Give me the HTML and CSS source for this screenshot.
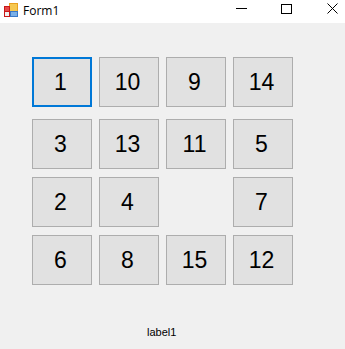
FILE: index.html
```html
<!DOCTYPE html>
<html>
<head>
<meta charset="utf-8">
<link rel="stylesheet" href="styles.css">
</head>
<body>
<div class="window">
  <div class="titlebar">
    <svg class="app-icon" width="16" height="16" viewBox="0 0 16 16">
      <rect x="7" y="1" width="9" height="10" fill="#e8a020"/>
      <rect x="8" y="2" width="7" height="8" fill="#f6c850"/>
      <rect x="8" y="9" width="8" height="6" fill="#3a78c8"/>
      <rect x="9" y="10" width="6" height="4" fill="#7ab0e8"/>
      <rect x="2" y="4" width="6" height="11" fill="#c81818"/>
      <rect x="3" y="5" width="4" height="4" fill="#e84848"/>
      <rect x="3" y="10" width="4" height="4" fill="#f0f0f0"/>
    </svg>
    <span class="title">Form1</span>
    <div class="controls">
      <svg class="ctl" width="46" height="23" viewBox="0 0 46 23"><line x1="12" y1="8.5" x2="23" y2="8.5" stroke="#000" stroke-width="1"/></svg>
      <svg class="ctl" width="46" height="23" viewBox="0 0 46 23"><rect x="11.5" y="4.5" width="10" height="9" fill="none" stroke="#000" stroke-width="1"/></svg>
      <svg class="ctl" width="32" height="23" viewBox="0 0 32 23"><path d="M11.5 3.5 L21.5 13.5 M21.5 3.5 L11.5 13.5" stroke="#000" stroke-width="1"/></svg>
    </div>
  </div>
  <div class="client">
    <div class="board">
      <div class="tile focus">1</div>
      <div class="tile">10</div>
      <div class="tile">9</div>
      <div class="tile">14</div>
      <div class="tile">3</div>
      <div class="tile">13</div>
      <div class="tile">11</div>
      <div class="tile">5</div>
      <div class="tile">2</div>
      <div class="tile">4</div>
      <div class="empty"></div>
      <div class="tile">7</div>
      <div class="tile">6</div>
      <div class="tile">8</div>
      <div class="tile">15</div>
      <div class="tile">12</div>
    </div>
    <div class="label">label1</div>
  </div>
</div>
</body>
</html>
```
FILE: styles.css
```css
html, body {
  margin: 0;
  padding: 0;
  background: #f0f0f0;
}
.window {
  width: 345px;
  height: 349px;
  background: #f0f0f0;
  display: flex;
  flex-direction: column;
}
.titlebar {
  height: 23px;
  background: #ffffff;
  display: flex;
  align-items: flex-start;
}
.app-icon {
  margin: 2px 0 0 2px;
  flex: none;
}
.title {
  margin-left: 5px;
  margin-top: 3px;
  font-family: "Open Sans", "Noto Sans", sans-serif;
  font-size: 12px;
  line-height: 16px;
  color: #000;
}
.controls {
  margin-left: auto;
  display: flex;
  margin-right: -3px;
}
.ctl {
  display: block;
}
.client {
  flex: 1;
  display: flex;
  flex-direction: column;
  padding: 34px 0 0 32px;
}
.board {
  display: grid;
  grid-template-columns: repeat(4, 60px);
  grid-template-rows: 54px 50px 50px 50px;
  column-gap: 7px;
  row-gap: 8px;
  align-items: start;
}
.tile {
  box-sizing: border-box;
  height: 50px;
  padding-right: 3px;
  background: #e1e1e1;
  border: 1px solid #adadad;
  display: flex;
  align-items: center;
  justify-content: center;
  font-family: "Liberation Sans", Arial, sans-serif;
  font-size: 23px;
  color: #000;
}
.tile.focus {
  border: 2px solid #0078d7;
}
.label {
  margin-top: 41px;
  margin-left: 115px;
  font-family: "Liberation Sans", Arial, sans-serif;
  font-size: 11px;
  color: #000;
}
```
